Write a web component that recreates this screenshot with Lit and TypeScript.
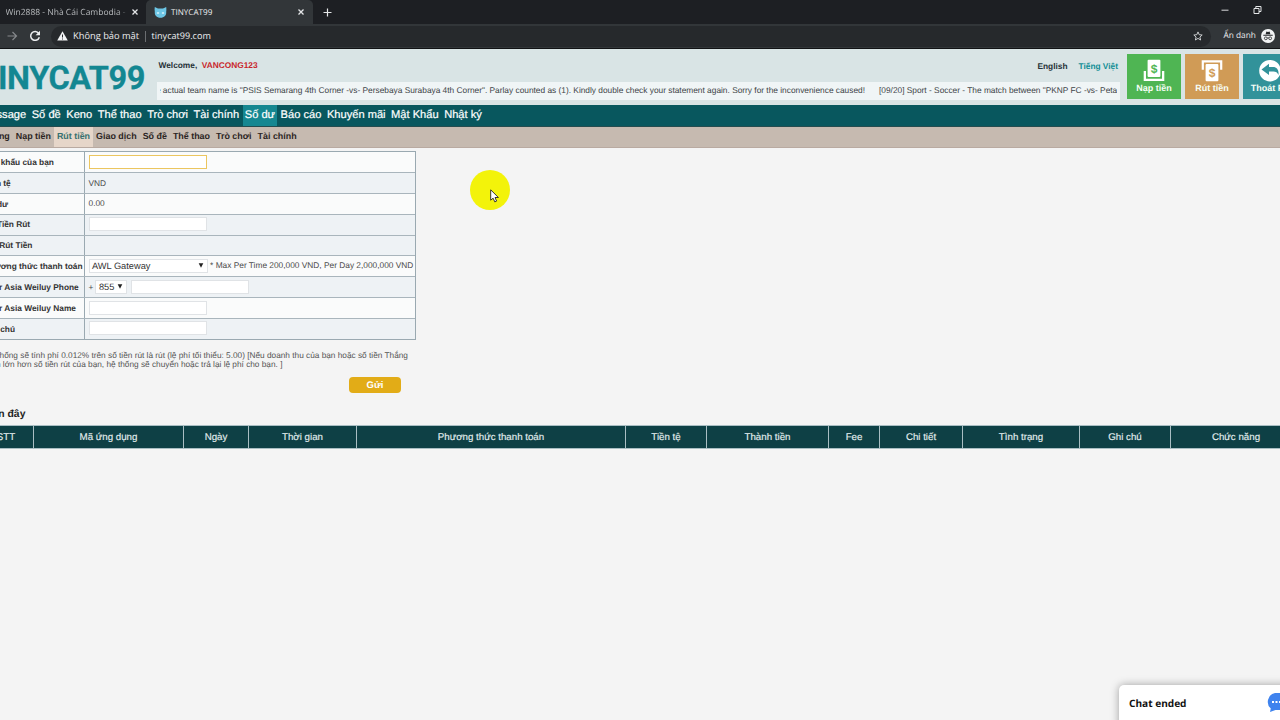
import { LitElement, html, css, svg } from "lit";
import { customElement } from "lit/decorators.js";
import { classMap } from "lit/directives/class-map.js";

const MAIN_NAV = ["Message", "Số đề", "Keno", "Thể thao", "Trò chơi", "Tài chính", "Số dư", "Báo cáo", "Khuyến mãi", "Mật Khẩu", "Nhật ký"];
const SUB_NAV = ["Tổng", "Nạp tiền", "Rút tiền", "Giao dịch", "Số đề", "Thể thao", "Trò chơi", "Tài chính"];
const COLUMNS: [string, number][] = [
  ["STT", 55], ["Mã ứng dụng", 150], ["Ngày", 65], ["Thời gian", 108], ["Phương thức thanh toán", 269],
  ["Tiền tệ", 81], ["Thành tiền", 122], ["Fee", 51], ["Chi tiết", 83], ["Tình trạng", 117], ["Ghi chú", 91], ["Chức năng", 131],
];

@customElement("browser-bar")
class BrowserBar extends LitElement {
  static styles = css`
    :host { display: block; height: 49px; flex: none; font-family: "Open Sans", "Noto Sans", sans-serif; font-size: 9.3px; color: #eceef0; text-rendering: geometricPrecision; }
    svg { display: block; flex: none; }
    .strip { height: 24px; background: #1d1f23; display: flex; box-sizing: border-box; }
    .tab { display: flex; align-items: center; box-sizing: border-box; height: 24px; overflow: hidden; }
    .old { width: 146px; padding: 0 7px 0 5.5px; color: #b6b9bc; font-size: 8.5px; }
    .clip { width: 122px; overflow: hidden; white-space: nowrap; margin-right: 5px; padding-top: 1px;
      -webkit-mask-image: linear-gradient(90deg, #000 112px, transparent 122px); mask-image: linear-gradient(90deg, #000 112px, transparent 122px); }
    .cur { width: 167px; background: #323639; border-radius: 5px 5px 0 0; padding: 0 8px; font-size: 8.1px; }
    .cur span { flex: 1; padding: 1px 0 0 4px; }
    .plus { margin: 7.5px 0 0 10px; }
    .wins { margin-left: auto; display: flex; gap: 24px; padding: 5px 18px 0 0; }
    .bar { height: 24px; background: #323639; border-bottom: 1px solid #111315; display: flex; align-items: center; }
    .bar > svg { margin-left: 6px; }
    .bar > .reload { margin-left: 11px; }
    .omni { flex: 1; margin-left: 10px; height: 21px; border-radius: 11px; background: #26292c; display: flex; align-items: center; padding: 0 8px 0 6px; }
    .secure { padding-left: 5px; width: 73px; box-sizing: border-box; white-space: nowrap; }
    .sep { width: 1px; height: 11px; background: #6b6e71; margin: 0 5.5px 0 4px; }
    .url { flex: 1; font-size: 9.1px; }
    .anon { width: 69px; box-sizing: border-box; padding-left: 12.5px; display: flex; align-items: center; justify-content: space-between; padding-right: 5px; font-size: 8.3px; white-space: nowrap; }
  `;
  render() {
    const x = svg`<path d="M1.5 1.5l5 5M6.5 1.5l-5 5" stroke="#e4e6e8" stroke-width="1.3"/>`;
    return html`
      <div class="strip">
        <div class="tab old"><div class="clip">Win2888 - Nhà Cái Cambodia - C</div><svg width="8" height="8" viewBox="0 0 8 8">${x}</svg></div>
        <div class="tab cur">
          <svg width="13" height="13" viewBox="0 0 13 13"><path d="M.8 1L4 2.6h5L12.2 1c.3 2 .2 3.5 0 4.8.4 3.6-1.9 6-5.7 6S.4 9.4.8 5.8C.5 4 .5 2.5.8 1z" fill="#6cc5e4"/><ellipse cx="4" cy="7" rx="1.3" ry=".7" fill="#e9fbff"/><ellipse cx="9" cy="7" rx="1.3" ry=".7" fill="#e9fbff"/></svg>
          <span>TINYCAT99</span><svg width="8" height="8" viewBox="0 0 8 8">${x}</svg></div>
        <svg class="plus" width="9" height="9" viewBox="0 0 9 9"><path d="M4.5.5v8M.5 4.5h8" stroke="#e4e6e8" stroke-width="1.2"/></svg>
        <div class="wins">
          <svg width="8" height="10" viewBox="0 0 8 10"><path d="M.5 5.2h7" stroke="#d8dadc"/></svg>
          <svg width="9" height="10" viewBox="0 0 9 10"><path d="M1 3.5h5v5H1zM2.8 3.5V1.5H8v5H6" stroke="#e4e6e8" fill="none"/></svg>
        </div>
      </div>
      <div class="bar">
        <svg width="12" height="12" viewBox="0 0 12 12"><path d="M1.5 6h9M6.5 2l4 4-4 4" stroke="#85888b" stroke-width="1.2" fill="none"/></svg>
        <svg class="reload" width="12" height="12" viewBox="0 0 12 12"><path d="M9.7 3.4A4.4 4.4 0 1 0 10.3 7.2" stroke="#eceef0" stroke-width="1.5" fill="none"/><path d="M11 .8v4.4H6.6z" fill="#eceef0"/></svg>
        <div class="omni">
          <svg width="11" height="10" viewBox="0 0 11 10"><path d="M5.5.2L10.8 9.6H.2z" fill="#f1f3f4"/><path d="M5 3.6h1v3H5zM5 7.4h1v1H5z" fill="#26292c"/></svg>
          <span class="secure">Không bảo mật</span><i class="sep"></i><span class="url">tinycat99.com</span>
          <svg width="10" height="10" viewBox="0 0 10 10"><path d="M5 .9l1.2 2.8 3 .3-2.3 2 .7 3L5 7.4 2.4 9l.7-3L.8 4l3-.3z" fill="none" stroke="#d8dadc" stroke-width=".9"/></svg>
        </div>
        <div class="anon"><span>Ẩn danh</span>
          <svg width="14" height="14" viewBox="0 0 14 14"><circle cx="7" cy="7" r="7" fill="#f1f3f4"/><path d="M4.6 5.2l.8-2.7L7 3l1.6-.5.8 2.7zM2.3 5.8h9.4v.9H2.3z" fill="#24272a"/><g fill="none" stroke="#24272a" stroke-width=".8"><circle cx="4.8" cy="9.3" r="1.4"/><circle cx="9.2" cy="9.3" r="1.4"/><path d="M6.2 9q.8-.5 1.6 0"/></g></svg>
        </div>
      </div>`;
  }
}

@customElement("app-root")
class AppRoot extends LitElement {
  static styles = css`
    :host { display: flex; flex-direction: column; position: relative; width: 1280px; height: 720px; overflow: hidden; background: #f4f4f4;
      font: 8.33px/10px "Liberation Sans", Arial, sans-serif; color: #4a4a4a; text-rendering: geometricPrecision; white-space: nowrap; }
    svg { display: block; flex: none; }
    .head { height: 56px; flex: none; background: #d9e4e5; display: flex; }
    .logo { width: 145px; display: flex; justify-content: flex-end; font: 700 32.5px/58px Roboto, sans-serif; color: #138792; letter-spacing: -0.4px; -webkit-text-stroke: 0.3px #138792; }
    .mid { width: 964px; margin-left: 12px; }
    .top { height: 33px; display: flex; align-items: center; box-sizing: border-box; padding: 0 2px 2px 1.5px; font-weight: 700; color: #263238; }
    .user { color: #c9242b; margin-left: 4.5px; flex: 1; }
    .vi { color: #138f96; margin-left: 11px; }
    .lang { padding-top: 2px; }
    .ticker { height: 18px; box-sizing: border-box; background: #f0f5f6; overflow: hidden; display: flex; align-items: center; padding: 0 3px 2px; color: #3e4448; }
    .window { display: flex; overflow: hidden; width: 957px; gap: 14px; }
    .first { display: flex; justify-content: flex-end; width: 705px; flex: none; }
    .acts { display: flex; gap: 4px; margin-left: 7px; padding-top: 5px; }
    .act { width: 54px; height: 45px; flex: none; display: flex; flex-direction: column; align-items: center; color: #f7fff7; font: 700 9px/11px "Liberation Sans", sans-serif; box-sizing: border-box; padding-top: 4.5px; gap: 1.5px; }
    .green { background: #4fb553; }
    .orange { background: #d09b56; }
    .teal { background: #32929a; }
    .nav { flex: none; height: 21px; background: #08575e; border-bottom: 1px solid #244c4f; display: flex; gap: 1.35px; padding-right: 10px; margin-left: -21px; font-size: 11.11px; line-height: 21px; color: #fff; -webkit-text-stroke: 0.2px #fff; }
    .nav span { padding: 0 2.1px; }
    .nav .on { background: #158791; }
    .sub { flex: none; height: 20px; background: #c6bab0; border-bottom: 1px solid #b9aaa1; display: flex; gap: 1px; margin-left: -14.5px; font: 700 8.92px/19px "Liberation Sans", sans-serif; color: #2c2523; }
    .sub span { padding: 0 2.5px; }
    .sub .on { background: #e6d6c9; color: #36706f; }
    .form { flex: none; margin: 3px 0 0 -18.6px; width: 434.6px; box-sizing: border-box; border: 1px solid #9aa9b1; border-left: 0; display: grid; grid-template-rows: 20px repeat(8, 20.85px); }
    .row { display: grid; grid-template-columns: 102.6px 1fr; border-top: 1px solid #a9b5bc; box-sizing: border-box; background: #fafbfb; }
    .row:first-child { border-top: 0; }
    .row.alt { background: #eef2f5; }
    .label { font-weight: 700; font-size: 8.33px; color: #333; padding: 0 0 0.5px 2.6px; display: flex; align-items: center; }
    .cell { border-left: 1px solid #9aa9b1; padding: 0 0 0.7px 3.5px; display: flex; align-items: center; }
    .input { width: 118px; height: 14px; background: #fff; border: 1px solid #e0e3e6; box-sizing: border-box; }
    .focus { border-color: #ecc65f; }
    .max { padding-bottom: 2px; margin-right: -4px; }
    .select { height: 14px; box-sizing: border-box; border: 1px solid #e0e3e6; background: #fff; display: flex; align-items: center; justify-content: space-between; padding: 0 3px 0 2.5px; font-size: 9.25px; color: #333; }
    .gateway { width: 119px; margin-right: 2.6px; }
    .code { width: 32px; margin: 0 3.2px 0 2px; }
    .note { flex: none; margin: 11px 0 0 -15.6px; line-height: 9.7px; color: #555; font-size: 8.27px; }
    .send { flex: none; margin: 6.5px 0 0 349px; width: 52px; height: 16.5px; border-radius: 4px; background: #e2ac17; color: #fff; font: 700 9.5px/17px "Liberation Sans", sans-serif; text-align: center; }
    .title { flex: none; margin: 13px 0 0 -15.6px; font: 700 10.4px/17px "Liberation Sans", sans-serif; color: #1f1f1f; height: 18px; }
    .thead { flex: none; height: 24px; box-sizing: border-box; margin-left: -21px; display: flex; background: #0e4045; border: solid #a9bec3; border-width: 1px 0; width: 1323px; margin-top: 1px; }
    .th { box-sizing: border-box; border-right: 1px solid #a9bec3; text-align: center; font-size: 9.72px; line-height: 23px; height: 22px; color: #e2edee; flex: none; -webkit-text-stroke: 0.15px #e2edee; }
    .spot { position: absolute; left: 470px; top: 170px; width: 40px; height: 40px; border-radius: 50%; background: #f3f30a; }
    .arrow { position: absolute; left: 490px; top: 189px; }
    .chat { position: absolute; left: 1119px; top: 685px; width: 180px; height: 45px; box-sizing: border-box; border-radius: 5px; background: #fff; box-shadow: 0 0 8px rgba(0,0,0,.35); display: flex; padding: 8px 0 0 10px; font: 700 10.1px/21px "Open Sans", sans-serif; color: #111; }
    .chat span { width: 138px; }
  `;

  private row(label: string, body: unknown, alt = false) {
    return html`<div class=${classMap({ row: true, alt })}><div class="label">${label}</div><div class="cell">${body}</div></div>`;
  }

  render() {
    const caret = html`<svg width="6" height="5" viewBox="0 0 6 5"><path d="M.7.3h4.6L3 4.8z" fill="#222"/></svg>`;
    const input = html`<div class="input"></div>`;
    return html`
      <browser-bar></browser-bar>
      <div class="head">
        <div class="logo">TINYCAT99</div>
        <div class="mid">
          <div class="top"><span>Welcome,</span><span class="user">VANCONG123</span><span class="lang">English</span><span class="lang vi">Tiếng Việt</span></div>
          <div class="ticker"><div class="window">
            <div class="first">The actual team name is "PSIS Semarang 4th Corner -vs- Persebaya Surabaya 4th Corner". Parlay counted as (1). Kindly double check your statement again. Sorry for the inconvenience caused!</div>
            <div>[09/20] Sport - Soccer - The match between "PKNP FC -vs- Peta</div>
          </div></div>
        </div>
        <div class="acts">
          <div class="act green"><svg width="22" height="23" viewBox="0 0 22 23"><path d="M.7 12h2.3v7.7h16V12h2.3v9.900H.7z" fill="#fff"/><rect x="4.600" y=".8" width="12.800" height="17.200" rx="1" fill="#fff"/><text x="11" y="13.600" text-anchor="middle" font-size="12" fill="#4fb553">$</text></svg>Nạp tiền</div>
          <div class="act orange"><svg width="22" height="23" viewBox="0 0 22 23"><path d="M.7 1.200h20.600v9.600h-2.200V3.400H2.900v7.400H.7z" fill="#fff"/><rect x="4.600" y="5" width="12.800" height="17.200" rx="1" fill="#fff"/><text x="11" y="17.800" text-anchor="middle" font-size="12" fill="#d09b56">$</text></svg>Rút tiền</div>
          <div class="act teal"><svg width="22" height="23" viewBox="0 0 22 23"><circle cx="11" cy="11.700" r="10.800" fill="#fff"/><path d="M2.500 10.500L10 4.800v3.300h4c4 0 6 3 5.500 7.900-1-2.600-2.800-3.600-5.500-3.500h-4V16z" fill="#32929a"/></svg>Thoát Ra</div>
        </div>
      </div>
      <div class="nav">${MAIN_NAV.map((t) => html`<span class=${classMap({ on: t === "Số dư" })}>${t}</span>`)}</div>
      <div class="sub">${SUB_NAV.map((t) => html`<span class=${classMap({ on: t === "Rút tiền" })}>${t}</span>`)}</div>
      <div class="form">
        ${this.row("Mật khẩu của bạn", html`<div class="input focus"></div>`)}
        ${this.row("Tiền tệ", "VND", true)}
        ${this.row("Số dư", "0.00")}
        ${this.row("Số Tiền Rút", input, true)}
        ${this.row("Phí Rút Tiền", "", true)}
        ${this.row("Phương thức thanh toán", html`<div class="select gateway">AWL Gateway${caret}</div><span class="max">* Max Per Time 200,000 VND, Per Day 2,000,000 VND</span>`)}
        ${this.row("Your Asia Weiluy Phone", html`+<div class="select code">855${caret}</div>${input}`, true)}
        ${this.row("Your Asia Weiluy Name", input)}
        ${this.row("Ghi chú", input, true)}
      </div>
      <div class="note">Hệ thống sẽ tính phí 0.012% trên số tiền rút là rút (lệ phí tối thiểu: 5.00) [Nếu doanh thu của bạn hoặc số tiền Thắng<br>toàn lớn hơn số tiền rút của bạn, hệ thống sẽ chuyển hoặc trả lại lệ phí cho bạn. ]</div>
      <div class="send">Gửi</div>
      <div class="title">Gần đây</div>
      <div class="thead">${COLUMNS.map(([t, w]) => html`<div class="th" style="width:${w}px">${t}</div>`)}</div>
      <div class="spot"></div>
      <svg class="arrow" width="10" height="14" viewBox="0 0 10 14"><path d="M.7.8v10.400l2.400-2 1.700 3.700 1.800-.8L5 8.500h3.400z" fill="#fff" stroke="#222" stroke-width=".9"/></svg>
      <div class="chat"><span>Chat ended</span><svg width="20" height="20" viewBox="0 0 20 20"><path d="M8 0h8v17H8.500L3 19l.8-3.500A9 9 0 0 1 8 0z" fill="#3f83ee"/><path d="M5 9h2M8.500 9h2M12 9h2" stroke="#fff" stroke-width="2"/></svg></div>`;
  }
}
